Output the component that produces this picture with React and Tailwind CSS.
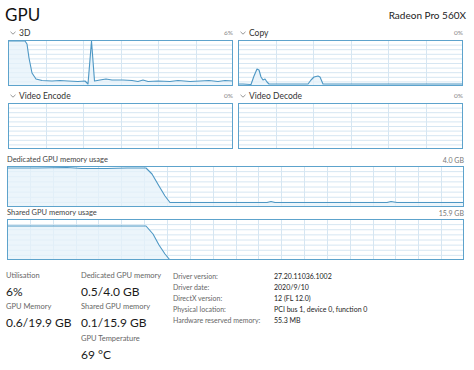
import React from "react";

const GRID = "#d6e6f2";
const LINE = "#4d97c4";
const FILL = "#e6f1f9";

// simple task-manager style graph
const Graph = ({ w, h, cols, rows, points, area = true }) => {
  const vx = [];
  for (let i = 1; i < cols; i++) vx.push((w / cols) * i);
  const hy = [];
  for (let i = 1; i < rows; i++) hy.push((h / rows) * i);
  const line = points.map((p) => p.join(",")).join(" ");
  const poly = points.length ? `0,${h} ${line} ${w},${h}` : "";
  return (
    <svg width={w} height={h} viewBox={`0 0 ${w} ${h}`} className="block">
      <rect x="0" y="0" width={w} height={h} fill="#ffffff" />
      {hy.map((y) => (
        <line key={"h" + y} x1="0" x2={w} y1={y + 0.5} y2={y + 0.5} stroke={GRID} strokeWidth="1" />
      ))}
      {vx.map((x) => (
        <line key={"v" + x} x1={Math.round(x) + 0.5} x2={Math.round(x) + 0.5} y1="0" y2={h} stroke={GRID} strokeWidth="1" />
      ))}
      {area && points.length > 0 && <polygon points={poly} fill={FILL} fillOpacity="0.75" />}
      {points.length > 0 && (
        <polyline points={line} fill="none" stroke={LINE} strokeWidth="1.1" strokeLinejoin="round" />
      )}
      <rect x="0.5" y="0.5" width={w - 1} height={h - 1} fill="none" stroke="#5da3cc" strokeWidth="1" />
    </svg>
  );
};

const Chevron = () => (
  <svg width="6" height="4" viewBox="0 0 6 4" className="mr-[3px]">
    <polyline points="0.5,0.8 3,3.2 5.5,0.8" fill="none" stroke="#8a8a8a" strokeWidth="0.9" />
  </svg>
);

const Panel = ({ title, pct, points, h = 46 }) => (
  <div className="flex flex-col">
    <div className="flex items-center justify-between h-[12px] mb-[1px]">
      <div className="flex items-center pl-[2px] text-[8.5px] text-[#333]">
        <Chevron />
        <span>{title}</span>
      </div>
      <span className="text-[6.5px] text-[#888]">{pct}</span>
    </div>
    <Graph w={225} h={h} cols={6} rows={10} points={points} />
  </div>
);

const threeD = [
  [0, 1], [17, 1], [19, 4], [21, 18], [24, 33], [28, 39], [34, 40.5], [44, 41], [52, 40.5], [60, 41],
  [70, 41.5], [77, 41], [80, 44], [83.5, 1], [86.5, 41], [92, 40], [98, 39], [104, 40], [115, 40],
  [124, 40.5], [130, 41.5], [135, 40], [140, 41.5], [150, 41], [162, 41.5], [170, 40.5], [182, 41.5],
  [192, 41], [201, 40.5], [210, 41.5], [217, 40.5], [225, 41],
];

const copy = [
  [0, 44], [5, 44], [13, 44.5], [16, 36], [19, 29], [21, 30], [23, 37], [25, 40], [27, 39], [29, 42],
  [31, 44], [70, 44], [73, 40], [76, 37], [80, 36], [82, 37], [85, 44], [225, 44],
];

const dedicated = [
  [0, 2], [30, 2], [60, 1.5], [75, 2.5], [100, 2.5], [120, 2], [139, 2], [145, 8], [152, 20],
  [158, 30], [163, 36.5], [260, 36.5], [264, 35.5], [268, 36.5], [380, 36.5], [384, 35.5], [390, 36.5], [457, 36.5],
];

const shared = [
  [0, 7], [139, 7], [146, 15], [152, 26], [158, 35], [163, 41], [457, 41],
];

const Stat = ({ label, value }) => (
  <div className="flex flex-col">
    <span className="text-[7.5px] leading-[12px] text-[#666] whitespace-nowrap">{label}</span>
    <span className="text-[12px] leading-[19px] text-[#1a1a1a] whitespace-nowrap">{value}</span>
  </div>
);

const info = [
  ["Driver version:", "27.20.11036.1002"],
  ["Driver date:", "2020/9/10"],
  ["DirectX version:", "12 (FL 12.0)"],
  ["Physical location:", "PCI bus 1, device 0, function 0"],
  ["Hardware reserved memory:", "55.3 MB"],
];

export default function App() {
  return (
    <div
      className="w-[474px] h-[370px] overflow-hidden bg-white"
      style={{ fontFamily: 'Lato, "Noto Sans", sans-serif' }}
    >
      {/* header */}
      <div className="flex items-end justify-between pl-[5px] pr-[8px] pt-[2px] h-[26px]">
        <span className="text-[17px] leading-[22px] text-[#111]">GPU</span>
        <span className="text-[10px] leading-[14px] text-[#222] mb-[4px]">Radeon Pro 560X</span>
      </div>

      {/* engine graphs */}
      <div className="grid grid-cols-[225px_225px] gap-x-[5px] gap-y-[4px] pl-[8px] mt-[1px]">
        <Panel title="3D" pct="6%" points={threeD} />
        <Panel title="Copy" pct="0%" points={copy} />
        <Panel title="Video Encode" pct="0%" points={[]} h={46} />
        <Panel title="Video Decode" pct="0%" points={[]} h={46} />
      </div>

      {/* memory graphs */}
      <div className="pl-[7px] mt-[5px] w-[464px]">
        <div className="flex items-center justify-between h-[12px]">
          <span className="text-[7.5px] text-[#444]">Dedicated GPU memory usage</span>
          <span className="text-[7px] text-[#777]">4.0 GB</span>
        </div>
        <Graph w={457} h={41} cols={20} rows={8} points={dedicated} />
        <div className="flex items-center justify-between h-[12px]">
          <span className="text-[7.5px] text-[#444]">Shared GPU memory usage</span>
          <span className="text-[7px] text-[#777]">15.9 GB</span>
        </div>
        <Graph w={457} h={41} cols={20} rows={8} points={shared} />
      </div>

      {/* stats */}
      <div className="flex items-start pl-[6px] mt-[10px]">
        <div className="flex flex-col w-[75px]">
          <Stat label="Utilisation" value="6%" />
          <Stat label="GPU Memory" value="0.6/19.9 GB" />
        </div>
        <div className="flex flex-col w-[92px]">
          <Stat label="Dedicated GPU memory" value="0.5/4.0 GB" />
          <Stat label="Shared GPU memory" value="0.1/15.9 GB" />
          <div className="mt-[1px]">
            <Stat label="GPU Temperature" value="69 °C" />
          </div>
        </div>
        <div className="grid grid-cols-[101px_auto] content-start text-[7px] leading-[11px] pt-[1px]">
          {info.map(([k, v]) => (
            <React.Fragment key={k}>
              <span className="text-[#666] whitespace-nowrap">{k}</span>
              <span className="text-[#222] whitespace-nowrap">{v}</span>
            </React.Fragment>
          ))}
        </div>
      </div>
    </div>
  );
}
